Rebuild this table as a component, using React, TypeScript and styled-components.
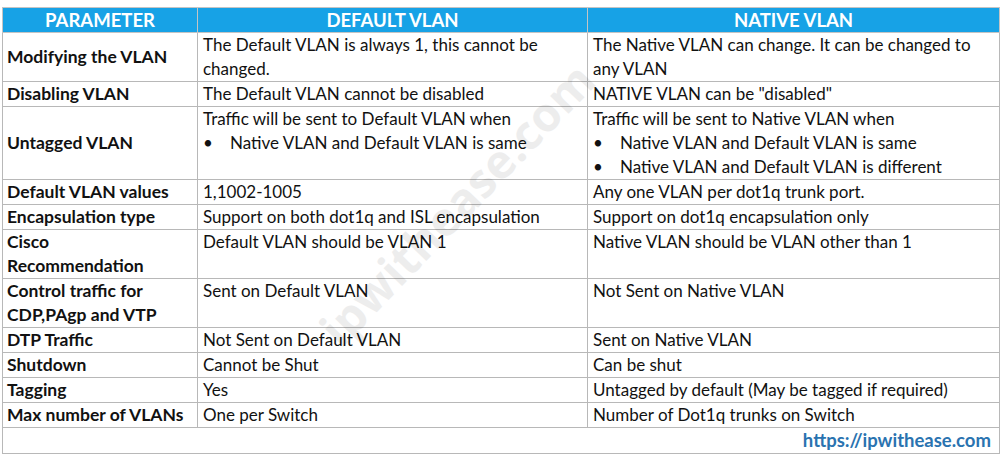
import React from "react";
import styled, { createGlobalStyle } from "styled-components";

const GlobalStyle = createGlobalStyle`
  html, body {
    margin: 0;
    padding: 0;
    background: #ffffff;
  }
  body {
    font-family: Lato, "Liberation Sans", sans-serif;
  }
`;

const Page = styled.div`
  position: relative;
  padding: 7px 4px 0 2px;
  width: 1000px;
  height: 467px;
  box-sizing: border-box;
  overflow: hidden;
`;

const Table = styled.table`
  width: 994px;
  border-collapse: collapse;
  table-layout: fixed;
  font-size: 17px;
  color: #111;
`;

const HeadCell = styled.th<{ $w: number }>`
  width: ${(p) => p.$w}px;
  background: #17a2e6;
  color: #ffffff;
  font-weight: 700;
  font-size: 18.5px;
  height: 24px;
  line-height: 24px;
  padding: 0;
  text-align: center;
  border: 1px solid #c4c4c4;
`;

const Label = styled.td`
  font-weight: 700;
  font-size: 17.5px;
  padding: 0 4px;
  line-height: 24px;
  vertical-align: middle;
  border: 1px solid #b8b8b8;
  white-space: nowrap;
`;

const Cell = styled.td`
  padding: 0 5px;
  line-height: 24px;
  vertical-align: top;
  border: 1px solid #b8b8b8;
`;

const Bullets = styled.ul`
  list-style: none;
  margin: 0;
  padding: 0;
`;

const Bullet = styled.li`
  display: flex;
  &::before {
    content: "•";
    width: 27px;
    flex: none;
  }
`;

const FooterCell = styled.td`
  text-align: right;
  padding: 0 8px;
  height: 24px;
  line-height: 24px;
  border: 1px solid #b8b8b8;
`;

const Link = styled.span`
  color: #2a73b0;
  font-weight: 700;
  font-size: 18.5px;
`;

// faint diagonal site watermark laid over the table
const Watermark = styled.div`
  position: absolute;
  left: 328px;
  top: 305px;
  font-family: "Open Sans", "Liberation Sans", sans-serif;
  font-size: 47px;
  font-weight: 700;
  color: #000;
  opacity: 0.065;
  transform: rotate(-46deg);
  transform-origin: left center;
  white-space: nowrap;
  pointer-events: none;
`;

type Row = {
  label: React.ReactNode;
  def: React.ReactNode;
  nat: React.ReactNode;
};

const rows: Row[] = [
  {
    label: "Modifying the VLAN",
    def: "The Default VLAN is always 1, this cannot be changed.",
    nat: "The Native VLAN can change. It can be changed to any VLAN",
  },
  {
    label: "Disabling VLAN",
    def: "The Default VLAN cannot be disabled",
    nat: 'NATIVE VLAN can be "disabled"',
  },
  {
    label: "Untagged VLAN",
    def: (
      <>
        Traffic will be sent to Default VLAN when
        <Bullets>
          <Bullet>Native VLAN and Default VLAN is same</Bullet>
        </Bullets>
      </>
    ),
    nat: (
      <>
        Traffic will be sent to Native VLAN when
        <Bullets>
          <Bullet>Native VLAN and Default VLAN is same</Bullet>
          <Bullet>Native VLAN and Default VLAN is different</Bullet>
        </Bullets>
      </>
    ),
  },
  { label: "Default VLAN values", def: "1,1002-1005", nat: "Any one VLAN per dot1q trunk port." },
  {
    label: "Encapsulation type",
    def: "Support on both dot1q and ISL encapsulation",
    nat: "Support on dot1q encapsulation only",
  },
  {
    label: (
      <>
        Cisco
        <br />
        Recommendation
      </>
    ),
    def: "Default VLAN should be VLAN 1",
    nat: "Native VLAN should be VLAN other than 1",
  },
  {
    label: (
      <>
        Control traffic for
        <br />
        CDP,PAgp and VTP
      </>
    ),
    def: "Sent on Default VLAN",
    nat: "Not Sent on Native VLAN",
  },
  { label: "DTP Traffic", def: "Not Sent on Default VLAN", nat: "Sent on Native VLAN" },
  { label: "Shutdown", def: "Cannot be Shut", nat: "Can be shut" },
  { label: "Tagging", def: "Yes", nat: "Untagged by default (May be tagged if required)" },
  { label: "Max number of VLANs", def: "One per Switch", nat: "Number of Dot1q trunks on Switch" },
];

export default function App() {
  return (
    <Page>
      <GlobalStyle />
      <Table>
        <thead>
          <tr>
            <HeadCell $w={194}>PARAMETER</HeadCell>
            <HeadCell $w={389}>DEFAULT VLAN</HeadCell>
            <HeadCell $w={411}>NATIVE VLAN</HeadCell>
          </tr>
        </thead>
        <tbody>
          {rows.map((r, i) => (
            <tr key={i}>
              <Label>{r.label}</Label>
              <Cell>{r.def}</Cell>
              <Cell>{r.nat}</Cell>
            </tr>
          ))}
          <tr>
            <FooterCell colSpan={3}>
              <Link>https://ipwithease.com</Link>
            </FooterCell>
          </tr>
        </tbody>
      </Table>
      <Watermark>ipwithease.com</Watermark>
    </Page>
  );
}
